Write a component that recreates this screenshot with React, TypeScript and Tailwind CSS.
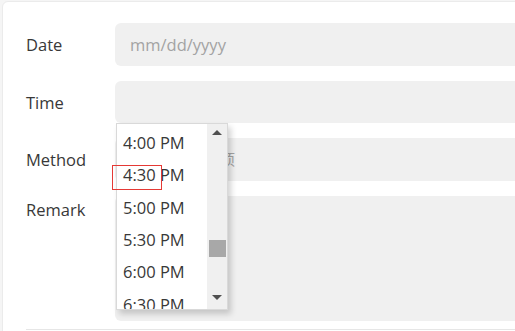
const times = ['4:00 PM', '4:30 PM', '5:00 PM', '5:30 PM', '6:00 PM', '6:30 PM']

export default function App() {
  return (
    <div
      className="relative h-[331px] w-[515px] overflow-hidden bg-[#f5f5f5] pl-[2px] pt-[1px] text-[16.5px] text-[#383838]"
      style={{ fontFamily: '"Open Sans", "Noto Sans CJK SC", sans-serif' }}
    >
      <div className="h-[400px] w-[600px] rounded-md border border-[#ebebeb] bg-white pl-[23px] pt-[21px]">
        <div className="grid grid-cols-[89px_1fr] gap-y-[15px]">
          <label className="flex h-[43px] items-center pt-[2px]">Date</label>
          <div className="flex h-[43px] items-center rounded-md bg-[#f0f0f0] pl-[15px] pt-[1px] text-[#a3a3a3]">
            mm/dd/yyyy
          </div>

          <label className="flex h-[42px] items-center pt-[2px]">Time</label>
          <div className="h-[42px] rounded-md bg-[#f0f0f0]"></div>

          <label className="flex h-[43px] items-center pt-[2px]">Method</label>
          <div className="flex h-[43px] items-center rounded-md bg-[#f0f0f0] pl-[15px] text-[15px] text-[#a3a3a3]">
            请选择付款选项
          </div>

          <label className="pt-[2px]">Remark</label>
          <div className="h-[125px] rounded-md bg-[#f0f0f0]"></div>
        </div>
        <div className="mt-[8px] border-t border-[#e6e6e6]"></div>
      </div>

      {/* time dropdown */}
      <div className="absolute left-[116px] top-[123px] flex h-[187px] w-[112px] border border-[#d9d9d9] bg-white shadow-[3px_4px_6px_rgba(0,0,0,0.18)]">
        <div className="flex-1 overflow-hidden pl-[6px] pt-[3px]">
          {times.map((t) => (
            <div key={t} className="flex h-[32.4px] items-center whitespace-nowrap">
              {t}
            </div>
          ))}
        </div>
        <div className="relative w-[20px] bg-[#f0f0f0]">
          <div className="absolute left-[5px] top-[6px] h-0 w-0 border-x-[5px] border-b-[5px] border-x-transparent border-b-[#505050]"></div>
          <div className="absolute left-[2px] top-[116px] h-[17px] w-[17px] bg-[#a8a8a8]"></div>
          <div className="absolute bottom-[9px] left-[5px] h-0 w-0 border-x-[5px] border-t-[5px] border-x-transparent border-t-[#505050]"></div>
        </div>
      </div>

      {/* highlight box */}
      <div className="absolute left-[112px] top-[165px] h-[25px] w-[50px] border border-[#e53935]"></div>
    </div>
  )
}
